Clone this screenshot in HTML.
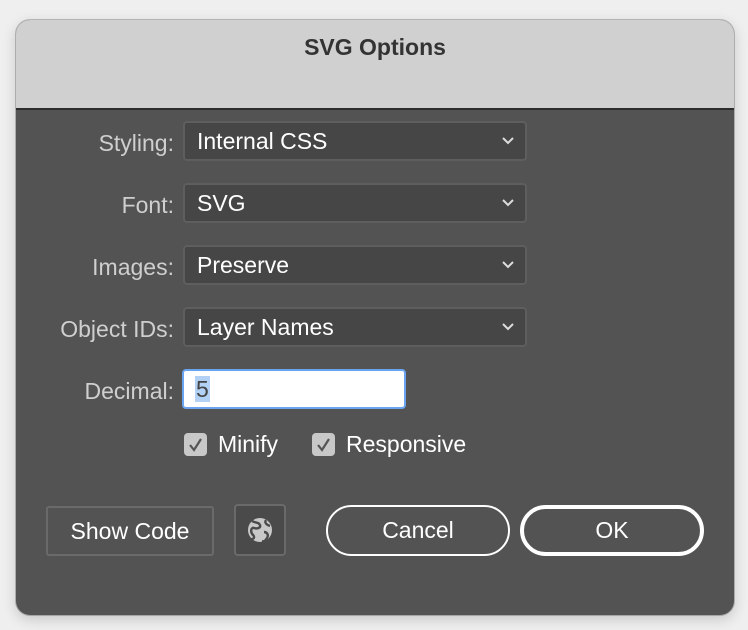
<!DOCTYPE html>
<html><head><style>
body{margin:0;width:748px;height:630px;background:#efefef;font-family:"Liberation Sans",sans-serif;position:relative;overflow:hidden}
.dlg{position:absolute;left:16px;top:20px;width:718px;height:595px;border-radius:14px;background:#535353;overflow:hidden;box-shadow:0 4px 14px rgba(0,0,0,.18),0 0 0 1px #bdbdbd}
.title{position:absolute;left:0;top:0;width:718px;height:88px;background:#d0d0d0;border-bottom:2px solid #2c2c2c;text-align:center;line-height:54px;font-weight:bold;font-size:23px;color:#333}
.lbl{position:absolute;right:560px;font-size:23px;color:#cfcfcf;text-align:right;white-space:nowrap}
.dd{position:absolute;left:167px;height:36px;background:#464646;border:2px solid #5e5e5e;border-radius:4px;color:#fff;font-size:23px;line-height:36px;padding-left:12px;box-sizing:content-box;width:328px}
.dd svg{position:absolute;right:10px;top:13px}
.inp{position:absolute;left:166px;top:349px;width:220px;height:36px;background:#fff;border:2px solid #6aa4f0;border-radius:4px;font-size:23px;line-height:36px}
.inp span{margin-left:11px;background:#b3d1f5;color:#444;padding:0 1px}
.cb{position:absolute;top:413px;width:23px;height:23px;background:#c8c8c8;border-radius:4px}
.cbt{position:absolute;top:411px;font-size:23px;color:#fff}
.btn{position:absolute;box-sizing:border-box;color:#fff;font-size:23px;text-align:center}
</style></head><body>
<div class="dlg">
<div class="title">SVG Options</div>
<div class="lbl" style="top:110px">Styling:</div>
<div class="dd" style="top:101px">Internal CSS<svg width="14" height="10"><path d="M2 2l5 5 5-5" stroke="#ddd" stroke-width="2" fill="none"/></svg></div>
<div class="lbl" style="top:172px">Font:</div>
<div class="dd" style="top:163px">SVG<svg width="14" height="10"><path d="M2 2l5 5 5-5" stroke="#ddd" stroke-width="2" fill="none"/></svg></div>
<div class="lbl" style="top:234px">Images:</div>
<div class="dd" style="top:225px">Preserve<svg width="14" height="10"><path d="M2 2l5 5 5-5" stroke="#ddd" stroke-width="2" fill="none"/></svg></div>
<div class="lbl" style="top:296px">Object IDs:</div>
<div class="dd" style="top:287px">Layer Names<svg width="14" height="10"><path d="M2 2l5 5 5-5" stroke="#ddd" stroke-width="2" fill="none"/></svg></div>
<div class="lbl" style="top:358px">Decimal:</div>
<div class="inp"><span>5</span></div>
<div class="cb" style="left:168px"><svg width="23" height="23"><path d="M6 12l4 5 7-11" stroke="#555" stroke-width="2.2" fill="none"/></svg></div>
<div class="cbt" style="left:202px">Minify</div>
<div class="cb" style="left:296px"><svg width="23" height="23"><path d="M6 12l4 5 7-11" stroke="#555" stroke-width="2.2" fill="none"/></svg></div>
<div class="cbt" style="left:330px">Responsive</div>
<div class="btn" style="left:30px;top:486px;width:168px;height:50px;border:2px solid #6a6a6a;border-radius:3px;line-height:46px">Show Code</div>
<div class="btn" style="left:218px;top:484px;width:52px;height:52px;border:2px solid #6a6a6a;border-radius:4px;background:#4a4a4a"><svg width="48" height="48" viewBox="0 0 48 48"><circle cx="24" cy="24" r="12" fill="#c8c8c8"/><path d="M16 15c3 2 7 1 8 4s-3 4-6 3-4 4-1 7-1 5-3 4M30 14c-2 3 1 5 4 6M28 26c3 0 5 3 3 6s-3 4-5 3" stroke="#4a4a4a" stroke-width="2.4" fill="none"/></svg></div>
<div class="btn" style="left:310px;top:485px;width:184px;height:51px;border:2px solid #fff;border-radius:26px;line-height:47px">Cancel</div>
<div class="btn" style="left:504px;top:485px;width:184px;height:51px;border:4px solid #fff;border-radius:26px;line-height:43px">OK</div>
</div>
</body></html>
